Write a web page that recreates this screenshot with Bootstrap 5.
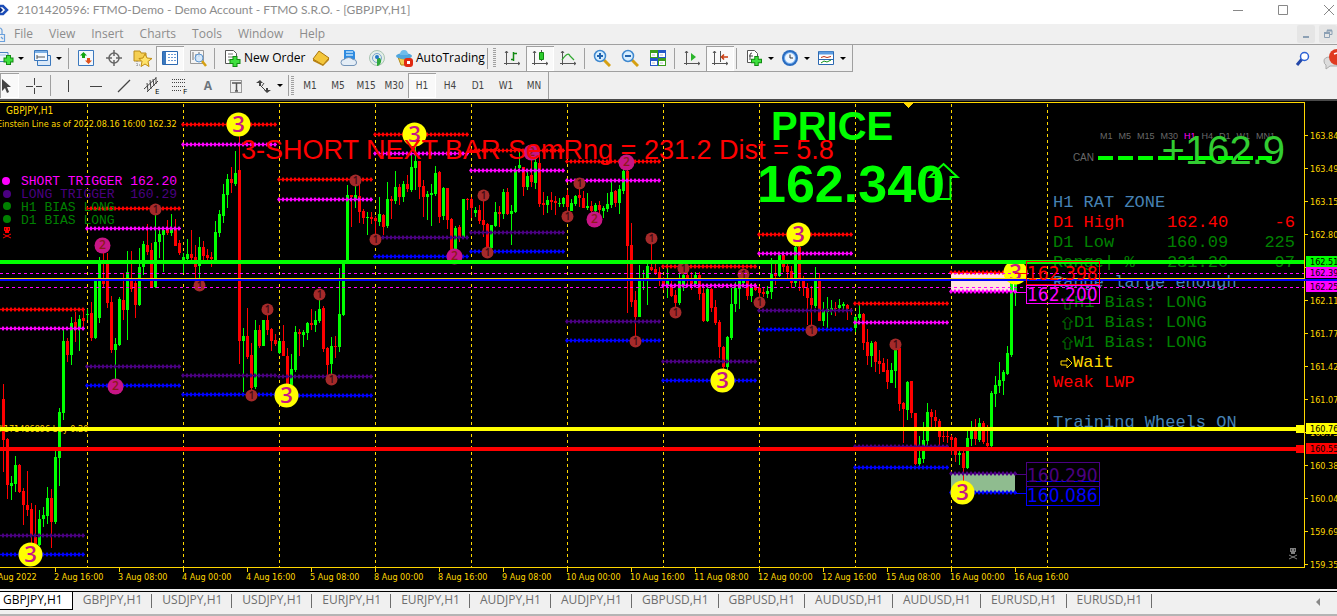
<!DOCTYPE html>
<html lang="en">
<head>
<meta charset="utf-8">
<meta name="viewport" content="width=device-width, initial-scale=1">
<title>FTMO-Demo - GBPJPY,H1</title>
<link href="https://cdn.jsdelivr.net/npm/bootstrap@5.3.0/dist/css/bootstrap.min.css" rel="stylesheet">
<style>
  body { font-family: "Open Sans", "Noto Sans", sans-serif; font-size: 12px; line-height: 16px; background: #f0f0f0; overflow: hidden; color: #000; }
  button, a { font: inherit; color: inherit; }
  button { border: 0; background: none; padding: 0; }
  svg { display: block; flex: none; }
  .titlebar { height: 20px; background: #fff; color: #8c8c8c; font-family: Lato, "Open Sans", sans-serif; box-sizing: content-box; padding-bottom: 4px; }
  .titlebar .win { width: 46px; height: 16px; }
  .menubar { height: 21px; border-bottom: 1px solid #a0a0a0; color: #8c8c8c; }
  .menubar a { text-decoration: none; }
  .mdi { width: 18px; height: 18px; background: #e5e5e5; border-radius: 2px; }
  .strip { height: 27px; }
  .strip-in { border-right: 1px solid #a0a0a0; }
  .strip-one .strip-in { border-bottom: 1px solid #a0a0a0; }
  .tool { width: 28px; height: 25px; display: flex; align-items: center; justify-content: center; }
  .drop { width: 36px; justify-content: flex-start; gap: 5px; padding-left: 5px; }
  .drop::after, .caret::after { content: ""; border: 3px solid transparent; border-top-color: #000; border-bottom: 0; }
  .first { width: 28px; justify-content: flex-start; gap: 4px; }
  .wide { width: auto; justify-content: flex-start; gap: 3px; padding-left: 5px; }
  .pressed { background: #f9f9f9; box-shadow: inset 1px 1px #a0a0a0, inset -1px -1px #fff; }
  .rule { width: 1px; height: 21px; background: #a0a0a0; margin: 0 3px 0 2px; }
  .grip { width: 3px; height: 20px; margin: 0 2px; background: repeating-linear-gradient(#a0a0a0 0 1px, #f0f0f0 1px 2px); }
  .period { font-family: "DejaVu Sans Condensed", sans-serif; font-size: 10px; color: #444; }
  .chart { min-height: 488px; background: #000; border-top: 2px solid #4a4a4a; }
  .tiny { font-family: "DejaVu Sans Condensed", "DejaVu Sans", sans-serif; font-size: 9px; }
  .hud { right: 0; top: 0; width: 274px; height: 100%; font-family: "Liberation Sans", sans-serif; color: #696969; overflow: hidden; }
  .frames { right: 29px; top: 29px; font-size: 9px; line-height: 12px; width: 175px; }
  .frames span { flex: none; }
  .quote { right: 19px; top: 26px; font-size: 40px; line-height: 46px; color: #32cd32; }
  .can { right: 32px; top: 51px; font-size: 10px; line-height: 12px; }
  .dashes { width: 174px; height: 4px; background: repeating-linear-gradient(90deg, #0f0 0 15px, transparent 15px 20px); }
  .zone { top: 92px; left: 23px; width: 242px; font-family: "Liberation Mono", monospace; font-size: 17px; line-height: 20px; }
  .zone table { width: 100%; }
  .zone td { padding: 0; line-height: 20px; }
  .blu { color: #4682b4; } .grn { color: #008000; } .rd { color: #f00; } .gld { color: #ffd700; }
  .arw { margin: 0 1px 0 9px; }
  .plot { min-width: 0; }
  .sheets { height: 20px; border-top: 1px solid #000; color: #6d6d6d; box-shadow: 0 -2px #f0f0f0; margin-top: 2px; }
  .sheet { height: 18px; padding: 0 10px 0 10px; text-decoration: none; line-height: 16px; white-space: nowrap; }
  .sheet + .sheet { border-right: 1px solid #6d6d6d; height: 14px; margin-top: 2px; line-height: 12px; padding-right: 9px; }
  .sheet.current { background: #fff; color: #000; padding: 0 9px 0 3px; border: solid #000; border-width: 0 1px 1px 0; }
  .foot { height: 5px; border-bottom: 2px solid #b4b4b4; }
</style>
<script src="https://cdn.jsdelivr.net/npm/bootstrap@5.3.0/dist/js/bootstrap.bundle.min.js"></script>
</head>
<body class="d-flex flex-column min-vh-100">

<header class="titlebar d-flex align-items-center">
  <svg width="9" height="16" viewBox="0 0 9 16"><path d="M0 4h3l4 4-4 4H0" fill="none" stroke="#1d4db8" stroke-width="2.5"/><path d="M0 5l3 3-3 3z" fill="#0a2f86"/></svg>
  <span class="ps-1 ms-1">2101420596: FTMO-Demo - Demo Account - FTMO S.R.O. - [GBPJPY,H1]</span>
  <div class="ms-auto d-flex">
    <button class="win" aria-label="Minimize"><svg width="46" height="16"><path d="M18 8.500h10" stroke="#888"/></svg></button>
    <button class="win" aria-label="Maximize"><svg width="46" height="16"><path d="M17.500 3.500h9v9h-9z" fill="none" stroke="#888"/></svg></button>
    <button aria-label="Close"><svg width="30" height="16"><path d="M17 3l10 10M27 3L17 13" stroke="#888"/></svg></button>
  </div>
</header>

<nav class="menubar d-flex align-items-center" aria-label="Menu">
  <svg width="6" height="18" viewBox="0 0 6 18"><path d="M-4 9.500h8.500v7H-4M-2 9V5q2-4 4 0v4M1 12l2 2" fill="none" stroke="#6aa0dc" stroke-width="1.200"/></svg>
  <div class="d-flex ps-2 gap-3">
    <a href="#">File</a><a href="#">View</a><a href="#">Insert</a><a href="#">Charts</a><a href="#">Tools</a><a href="#">Window</a><a href="#">Help</a>
  </div>
  <div class="ms-auto d-flex gap-1">
    <button class="mdi" aria-label="Minimize chart"><svg width="18" height="18"><path d="M6 12h6" stroke="#8ca0b4" stroke-width="2"/></svg></button>
    <button class="mdi" aria-label="Restore chart"><svg width="18" height="18"><path d="M5.500 8.500h5v4h-5zM8 8V5.500h5v4h-2" fill="none" stroke="#8ca0b4"/><path d="M5 8h6M8 5.500h5" stroke="#8ca0b4" stroke-width="2"/></svg></button>
  </div>
</nav>

<div class="strip strip-one d-flex">
  <div class="strip-in d-flex align-items-center pe-1">
    <button class="tool first" aria-label="New chart"><svg width="14" height="20"><path d="M0 4.500h8v9H0" fill="#eef5fc" stroke="#4b84c4"/><path d="M0 7h6" stroke="#9bbfe4"/><path d="M8.500 7v10M3.500 12h10" stroke="#128a12" stroke-width="5"/><path d="M8.500 8v8M4.500 12h8" stroke="#3ee03e" stroke-width="3"/></svg><span class="caret d-flex"></span></button>
    <button class="tool drop" style="width:38px" aria-label="Profiles"><svg width="18" height="18"><path d="M4.500 6.500h13v10h-13z" fill="#dbe9f8" stroke="#3b78bd"/><path d="M1.500 1.500h13v10h-13z" fill="#f4f9fe" stroke="#3b78bd"/><path d="M2 3h12" stroke="#7db0e4" stroke-width="2"/><path d="M4 6v4M4 8h8" stroke="#555"/></svg></button>
    <span class="rule"></span>
    <button class="tool" aria-label="Market watch"><svg width="18" height="18"><path d="M1.500 1.500h15v15h-15z" fill="#f3f8fd" stroke="#3b78bd"/><path d="M6.500 3l3.500 3.500H8V9H5V6.500H3z" fill="#11a511"/><path d="M11.500 15L8 11.500h2V9h3v2.500h2z" fill="#e0511a"/></svg></button>
    <button class="tool" aria-label="Data window"><svg width="18" height="18"><circle cx="9" cy="9" r="5" fill="none" stroke="#666" stroke-width="1.500"/><path d="M9 1v6M9 11v6M1 9h6M11 9h6" stroke="#666" stroke-width="1.500"/></svg></button>
    <button class="tool" aria-label="Navigator"><svg width="20" height="18"><path d="M2 2h6l1 2h5v8H2z" fill="#f5cf52" stroke="#b98a18"/><path d="M13 5l2 4 5 .500-4 3 1 5-4-2.500-4 2.500 1-5-3-3 4-.500z" fill="#ffe36a" stroke="#c08c10"/><path d="M5 12v5M5 16h3" stroke="#888" stroke-dasharray="1 1"/></svg></button>
    <button class="tool pressed" aria-label="Terminal"><svg width="18" height="18"><path d="M1.500 2.500h15v13h-15z" fill="#fff" stroke="#2b68b1"/><path d="M2 3h3v12H2z" fill="#3b78bd"/><path d="M7 5.500h9M7 8.500h9M7 11.500h9" stroke="#6b9bd6" stroke-dasharray="2 1"/></svg></button>
    <button class="tool" aria-label="Strategy tester"><svg width="18" height="18"><path d="M1.500 1.500h13v13h-13z" fill="#f4f4f4" stroke="#999"/><path d="M4 3v8M7 5v6M10 3v5" stroke="#777"/><circle cx="10" cy="9" r="4" fill="#cfe6fb" fill-opacity=".8" stroke="#5b94cf"/><path d="M13 12l4 5" stroke="#d6a012" stroke-width="2.500"/></svg></button>
    <span class="rule"></span>
    <button class="tool wide" style="width:89px"><svg width="18" height="19"><path d="M2.500 1.500h8l3 3v10h-11z" fill="#fff" stroke="#555"/><path d="M5 5h5M5 8h6M5 11h4" stroke="#777"/><path d="M12 7v11M6.500 12.500h11" stroke="#128a12" stroke-width="5"/><path d="M12 8v9M7.500 12.500h9" stroke="#3ee03e" stroke-width="3"/></svg>New Order</button>
    <button class="tool" aria-label="MetaEditor"><svg width="18" height="18"><path d="M1 10l6-8 10 7-6 7z" fill="#f3c63b" stroke="#a8760f"/><path d="M1 10l10 6 6-7v2l-6 6L1 12z" fill="#b8800f"/></svg></button>
    <button class="tool" aria-label="Virtual hosting"><svg width="18" height="18"><path d="M4 1h9l2 2v7H4z" fill="#2f8be0"/><path d="M6 3h7M6 6h7" stroke="#bfe3ff" stroke-width="1.500"/><path d="M4 16.500a3 3 0 0 1 0-6q5-4 9 0a3 3 0 0 1 1 6z" fill="#e4edf6" stroke="#7293b8"/></svg></button>
    <button class="tool" aria-label="Signals"><svg width="18" height="18"><circle cx="9" cy="9" r="7.500" fill="#e4efe8" stroke="#a9c4b2"/><circle cx="9" cy="9" r="4.500" fill="none" stroke="#7aa3cf"/><path d="M9 9h3a5 5 0 0 1-3 8z" fill="#2fa83c"/><circle cx="9" cy="8" r="2" fill="#2378c8"/></svg></button>
    <button class="tool wide" style="width:94px; padding-left:4px"><svg width="18" height="18"><path d="M3 8q5 4 12 0l-3 8H6z" fill="#f3cf54" stroke="#b18918"/><ellipse cx="9" cy="7" rx="8" ry="3" fill="#4fa6de"/><path d="M5 6q0-5 4-5t4 5z" fill="#6dbcec"/><rect x="9" y="9" width="9" height="9" rx="3" fill="#e02a12"/><path d="M12 12h3v3h-3z" fill="#fff"/></svg>AutoTrading</button>
    <span class="rule"></span><span class="grip"></span>
    <button class="tool" aria-label="Bar chart"><svg width="18" height="18"><path d="M3.500 2v14M1 14.500h16M2 4l1.500-2L5 4M15 13l2 1.500-2 1.500" fill="none" stroke="#555"/><path d="M10.500 3v9M8 10.500h2M11 4.500h3" stroke="#128a12" stroke-width="1.500"/></svg></button>
    <button class="tool pressed" aria-label="Candlesticks"><svg width="18" height="18"><path d="M3.500 2v14M1 14.500h16M2 4l1.500-2L5 4M15 13l2 1.500-2 1.500M10.500 1v11" fill="none" stroke="#555"/><path d="M8.500 3.500h4v7h-4z" fill="#2ecc2e" stroke="#128a12"/></svg></button>
    <button class="tool" aria-label="Line chart"><svg width="18" height="18"><path d="M3.500 2v14M1 14.500h16M2 4l1.500-2L5 4M15 13l2 1.500-2 1.500" fill="none" stroke="#555"/><path d="M3 11q6-9 8-4l4 4" fill="none" stroke="#30a830" stroke-width="1.300"/></svg></button>
    <span class="rule"></span>
    <button class="tool" aria-label="Zoom in"><svg width="18" height="18"><path d="M11 11l6 6" stroke="#d6a012" stroke-width="3"/><circle cx="7" cy="7" r="5.500" fill="#d8efff" stroke="#3f88cf" stroke-width="1.500"/><path d="M4 7h6M7 4v6" stroke="#2465ae" stroke-width="2"/></svg></button>
    <button class="tool" aria-label="Zoom out"><svg width="18" height="18"><path d="M11 11l6 6" stroke="#d6a012" stroke-width="3"/><circle cx="7" cy="7" r="5.500" fill="#d8efff" stroke="#3f88cf" stroke-width="1.500"/><path d="M4 7h6" stroke="#2465ae" stroke-width="2"/></svg></button>
    <button class="tool" aria-label="Tile windows"><svg width="18" height="18"><path d="M1 1h8v8H1zM9 9h8v8H9z" fill="#3a9e1c"/><path d="M9 1h8v8H9zM1 9h8v8H1z" fill="#2458c8"/><path d="M2 4h6v4H2zM10 4h6v4h-6zM2 12h6v4H2zM10 12h6v4h-6z" fill="#fff"/><path d="M3 6h3M11 6h3M3 14h3M11 14h3" stroke="#b4bcc8"/></svg></button>
    <span class="rule"></span>
    <button class="tool" aria-label="Auto scroll"><svg width="18" height="18"><path d="M3.500 2v14M1 14.500h16M2 4l1.500-2L5 4M15 13l2 1.500-2 1.500" fill="none" stroke="#555"/><path d="M8 4l5 4-5 4z" fill="#2bb52b"/></svg></button>
    <button class="tool pressed" aria-label="Chart shift"><svg width="18" height="18"><path d="M3.500 2v14M1 14.500h16M2 4l1.500-2L5 4M15 13l2 1.500-2 1.500M9.500 2v11" fill="none" stroke="#555"/><path d="M17 8h-6M13 5.500L10.500 8l2.500 2.500" fill="none" stroke="#c83c10" stroke-width="1.500"/></svg></button>
    <span class="rule"></span>
    <button class="tool drop" aria-label="Indicators"><svg width="18" height="18"><path d="M2.500 1.500h7l3 3v9h-10z" fill="#fff" stroke="#555"/><path d="M5 11V6q0-2 2-2M4 7h4" fill="none" stroke="#444"/><path d="M11.500 7v10M6 12h11" stroke="#128a12" stroke-width="4.500"/><path d="M11.500 8v8M7 12h9" stroke="#3ee03e" stroke-width="2.500"/></svg></button>
    <button class="tool drop" aria-label="Periods"><svg width="18" height="18"><circle cx="9" cy="9" r="8" fill="#2a6cc0"/><circle cx="9" cy="9" r="5.500" fill="#eef6ff" stroke="#6aaaf0"/><path d="M9 5.500V9h3" fill="none" stroke="#333"/></svg></button>
    <button class="tool drop" aria-label="Templates"><svg width="18" height="18"><path d="M1.500 2.500h15v13h-15z" fill="#fff" stroke="#2b68b1"/><path d="M2 4h14" stroke="#5b9be0" stroke-width="3"/><path d="M4 8.500l3-1 3 1 4-1" stroke="#c03010" fill="none"/><path d="M2 10.500h14" stroke="#2b68b1"/><path d="M4 14l3-2 3 1 4-2" stroke="#11931b" fill="none"/></svg></button>
  </div>
  <div class="ms-auto d-flex align-items-center gap-2">
    <button aria-label="Search"><svg width="16" height="16"><path d="M2 14l5-6" stroke="#2347a8" stroke-width="3"/><circle cx="9.500" cy="5.500" r="4" fill="#fff" stroke="#2d62d4" stroke-width="1.500"/></svg></button>
    <button class="ms-1" aria-label="Notifications"><svg width="14" height="24"><path d="M1 14q0-4 6-4h7v9H7l-4 3v-4q-2-1-2-4z" fill="#dcdcdc" stroke="#aaa"/><circle cx="14" cy="10" r="8" fill="#e03a20"/><path d="M11 7l3-1" stroke="#fff" stroke-width="1.500"/></svg></button>
  </div>
</div>

<div class="strip d-flex">
  <div class="strip-in d-flex align-items-center">
    <button class="tool pressed" style="width:19px; justify-content:start" aria-label="Cursor"><svg width="14" height="16"><path d="M2 1v12l3-3 2 5 2-1-2-5h4z" fill="#444"/></svg></button>
    <button class="tool" style="width:29px" aria-label="Crosshair"><svg width="16" height="16"><path d="M8.500 0v7M8.500 10v6M0 8.500h7M10 8.500h6" stroke="#444"/></svg></button>
    <span class="rule"></span>
    <button class="tool" aria-label="Vertical line"><svg width="16" height="16"><path d="M8.500 2v12" stroke="#444"/></svg></button>
    <button class="tool" aria-label="Horizontal line"><svg width="16" height="16"><path d="M2 8.500h12" stroke="#444"/></svg></button>
    <button class="tool" aria-label="Trendline"><svg width="16" height="16"><path d="M2 14L14 2" stroke="#444" stroke-width="1.200"/></svg></button>
    <button class="tool" aria-label="Equidistant channel"><svg width="18" height="20"><path d="M1 13L13 2M4 16L15 5M4 7l1 8M7 4l1 9M10 3l1 7M13 1v7" stroke="#444"/><text x="12" y="18" font-size="8">E</text></svg></button>
    <button class="tool" aria-label="Fibonacci"><svg width="18" height="20"><path d="M1 3.500h14M1 6.500h14M1 10.500h14M1 14.500h9" stroke="#444" stroke-dasharray="1 1"/><text x="12" y="18" font-size="8">F</text></svg></button>
    <button class="tool fw-bold text-secondary" aria-label="Text">A</button>
    <button class="tool" aria-label="Text label"><svg width="16" height="16"><path d="M2.500 2.500h11v12h-11z" fill="none" stroke="#444" stroke-dasharray="1 1"/><path d="M4 5h9M8.500 5v8M7 13h3" fill="none" stroke="#555" stroke-width="1.500"/></svg></button>
    <button class="tool drop" aria-label="Arrows"><svg width="17" height="16"><path d="M5 2l3 3h-2v1h-2v-1H1zM4 6h2v2H4zM12 15l-3-3h2v-2h2v2h3z" fill="#444"/><path d="M6 8l4 4M9 5l-2 3" stroke="#444"/></svg></button>
    <span class="rule me-0"></span><span class="grip"></span>
    <button class="tool period">M1</button><button class="tool period">M5</button><button class="tool period">M15</button><button class="tool period">M30</button><button class="tool period pressed">H1</button><button class="tool period">H4</button><button class="tool period">D1</button><button class="tool period">W1</button><button class="tool period">MN</button>
  </div>
</div>

<main class="chart d-flex flex-grow-1">
  <div class="plot flex-grow-1 position-relative overflow-hidden">
    <section class="hud position-absolute" aria-label="Signals panel">
      <div class="frames position-absolute d-flex justify-content-between">
        <span>M1</span><span>M5</span><span>M15</span><span>M30</span><span style="color:#f0f">H1</span><span>H4</span><span>D1</span><span>W1</span><span>MN1</span>
      </div>
      <div class="quote position-absolute">+162.9</div>
      <div class="can position-absolute d-flex align-items-center gap-1"><span>CAN</span><span class="dashes"></span></div>
      <div class="zone position-absolute">
        <div class="blu">H1 RAT ZONE</div>
        <table>
          <tr class="rd"><td>D1 High</td><td>162.40</td><td class="text-end">-6</td></tr>
          <tr class="grn"><td>D1 Low</td><td>160.09</td><td class="text-end">225</td></tr>
          <tr class="grn"><td>Range| %</td><td>231.20</td><td class="text-end">97</td></tr>
        </table>
        <div class="blu">Range large enough</div>
        <div class="grn d-flex align-items-center"><svg class="arw" width="11" height="14"><use href="#up"/></svg>H1 Bias: LONG</div>
        <div class="grn d-flex align-items-center"><svg class="arw" width="11" height="14"><use href="#up"/></svg>D1 Bias: LONG</div>
        <div class="grn d-flex align-items-center"><svg class="arw" width="11" height="14"><use href="#up"/></svg>W1 Bias: LONG</div>
        <div class="gld d-flex align-items-center"><svg style="margin-left:7px" width="13" height="12"><path d="M1 4h6V1l5 5-5 5V8H1z" fill="none" stroke="#ffd700"/></svg>Wait</div>
        <div class="rd">Weak LWP</div>
        <div>&nbsp;</div>
        <div class="blu">Training Wheels ON</div>
      </div>
    </section>
    <svg class="position-relative" width="100%" height="486" role="img" aria-label="GBPJPY hourly candlestick chart">
      <defs>
        <g id="up"><path d="M5.500 1l5 5H8v7H3V6H.500z" fill="none" stroke="#008000"/></g>
        <g id="skull"><path d="M2 1h6v4H7v2H3V5H2z" fill="currentColor"/><path d="M3 3h1M6 3h1" stroke="#000"/><path d="M1 8l8 4M9 8l-8 4" stroke="currentColor"/></g>
      </defs>
      <g transform="translate(0,-101)">
        <g id="grid"></g>
        <path d="M951 272h64v20h-64z" fill="#ffe4e1"/><path d="M951 473h64v20h-64z" fill="#8fbc8f"/>
        <g id="bars" shape-rendering="crispEdges"></g>
        <g id="levels"></g>
        <g id="marks" text-anchor="middle"></g>
        <g class="tiny" fill="#ffd700">
          <text x="6" y="114" style="font-size:10px">GBPJPY,H1</text><text x="-3" y="127">Einstein Line as of 2022.08.16 16:00 162.32</text>
          <text x="-3" y="432">#171486896 buy 0.20</text>
        </g>
        <g font-family="Liberation Mono, monospace" font-size="13">
          <circle cx="6" cy="181" r="4" fill="#f0f"/><text x="21" y="185" fill="#f0f">SHORT TRIGGER 162.20</text>
          <circle cx="7" cy="194" r="4" fill="#4b0082"/><text x="21" y="198" fill="#4b0082" xml:space="preserve">LONG TRIGGER  160.29</text>
          <circle cx="7" cy="206" r="4" fill="#008000"/><text x="21" y="211" fill="#008000">H1 BIAS LONG</text>
          <circle cx="7" cy="219" r="4" fill="#008000"/><text x="21" y="224" fill="#008000">D1 BIAS LONG</text>
          <use href="#skull" x="2" y="226" color="#f00"/>
        </g>
        <g font-family="Liberation Sans, sans-serif">
          <text x="241" y="159" font-size="27" fill="#f00">3-SHORT NEXT BAR SemRng = 231.2 Dist = 5.8</text>
          <g font-weight="bold" fill="#0f0"><text x="771" y="140" font-size="40">PRICE</text><text x="757" y="202" font-size="52">162.340</text></g>
        </g>
        <path d="M943.500 164l14 13h-7v22h-15v-22h-6z" fill="none" stroke="#0f0" stroke-width="2"/>
        <g shape-rendering="crispEdges">
          <rect y="260" width="100%" height="4" fill="#0f0"/>
          <line x2="100%" y1="273.500" y2="273.500" stroke="#f0f" stroke-dasharray="3 3"/>
          <line x2="100%" y1="287.500" y2="287.500" stroke="#f0f" stroke-dasharray="3 3"/>
          <rect y="278" width="100%" height="1" fill="#ffd700"/>
          <rect y="279" width="100%" height="2" fill="#00f"/>
          <rect y="427" width="100%" height="4" fill="#ff0"/>
          <rect y="447" width="100%" height="4" fill="#f00"/>
          <rect y="102" width="100%" height="1" fill="#ffd700"/>
          <rect y="567" width="100%" height="1" fill="#ffd700"/>
          <path d="M904 103h9l-4.500 5z" fill="#ffd700"/>
        </g>
        <g fill="none" shape-rendering="crispEdges">
          <path d="M1015 273.500h11.500M1026.500 261.500h73v23h-73z" stroke="#f00"/>
          <path d="M1015 292.500h11.500M1026.500 285.500h73v18h-73z" stroke="#f0f"/>
          <path d="M1015 493.500h11.500M1026.500 481.500h73v24h-73z" stroke="#00f"/>
          <path d="M1015 474.500h11.500M1026.500 462.500h73v24h-73z" stroke="#4b0082"/>
        </g>
        <g font-family="DejaVu Sans Condensed, DejaVu Sans, sans-serif" font-size="19">
          <text x="1027" y="280" fill="#f00">162.398</text><text x="1027" y="301" fill="#f0f">162.200</text>
          <text x="1027" y="482" fill="#4b0082">160.290</text><text x="1027" y="502" fill="#00f">160.086</text>
        </g>
        <g id="dates" class="tiny" fill="#ffd700"></g>
      </g>
      <svg x="100%" overflow="visible"><g transform="translate(-16,446)" color="#808080"><use href="#skull"/></g>
        <path d="M-8 324h8v8h-8z" fill="#ff0"/><path d="M-8 344h8v8h-8z" fill="#f00"/></svg>
    </svg>
  </div>
  <svg width="33" height="486" role="img" aria-label="Price scale"><g transform="translate(-1304,-101)">
    <path d="M1304.500 102v466" stroke="#ffd700"/><path d="M1304 279h33v2h-33z" fill="#00f"/>
    <g id="axis" class="tiny"></g></g>
  </svg>
</main>

<footer>
  <nav class="sheets d-flex" id="sheets" aria-label="Charts"></nav>
  <div class="foot"></div>
</footer>

<script>
const byId = id => document.getElementById(id);

// One entry per hour: direction, body top, body bottom, high, low.
const bars = `R399 440 384 472,R439 485 438 499,G483 486 476 500,G465 484 456 492,R465 492 464 493,R491 505 488 525,R505 510 471 516,R509 536 503 543,R537 544 505 545,G519 545 510 546,G515 519 507 527,G498 516 487 524,R498 522 489 548,G457 522 451 524,G412 458 408 486,G341 413 330 420,R341 355 338 362,G323 355 317 365,R322 330 312 342,G319 328 315 351,R318 321 311 330,G314 315 309 320,R313 338 302 341,G281 338 278 339,G262 318 257 323,R281 284 252 287,R262 303 253 308,R302 350 296 353,G344 350 338 382,G299 345 297 346,R300 310 273 320,G272 310 251 340,R280 289 251 292,R283 305 278 318,G267 305 248 306,G244 267 241 275,R245 252 224 255,R250 287 243 288,G242 287 205 288,G234 242 230 258,G230 235 227 272,R228 233 220 235,G228 233 214 236,R228 246 219 246,R243 253 240 255,G257 262 253 273,G254 259 239 260,R254 258 230 260,R257 267 245 280,G247 266 237 281,R247 256 241 261,R255 258 249 261,R257 259 252 267,G232 261 221 262,G214 233 210 237,G194 216 184 223,G179 195 174 208,R179 183 167 193,G173 184 151 186,R170 341 135 364,G336 341 328 392,R336 357 308 359,R355 388 343 390,G330 387 320 389,R330 346 325 348,G320 346 320 346,R320 330 313 335,R329 341 328 351,R340 344 334 346,G341 353 340 354,R341 356 325 356,R356 385 348 390,G369 385 354 390,G332 370 326 372,R332 334 329 356,G332 335 330 347,G323 333 322 340,R323 325 309 330,G320 325 311 332,G309 321 294 323,R308 349 306 352,R348 365 347 375,G346 364 337 375,R346 347 336 358,G314 347 268 352,G263 315 262 316,G195 263 185 264,R195 197 195 227,G195 199 180 208,R196 212 183 223,R211 218 209 224,G217 218 212 235,R217 219 212 224,R218 221 216 234,G214 222 197 226,R215 227 214 235,G199 226 182 228,R199 201 196 219,G187 201 171 204,R187 197 184 205,G184 197 181 202,R184 189 175 192,G167 190 153 192,G161 168 145 190,R161 187 161 199,R186 197 180 217,G194 197 191 220,G193 195 184 226,G173 194 166 196,R172 217 171 223,G188 216 187 220,R188 220 188 229,R219 252 218 253,G228 255 226 255,R227 237 225 242,G199 237 199 237,R199 200 198 210,R199 208 197 218,G210 213 207 217,R210 221 205 224,R220 225 195 237,R224 250 223 252,G225 248 225 250,G212 226 202 227,R212 214 206 227,G192 214 189 219,R192 214 188 215,G211 214 205 245,G171 212 166 213,G165 168 152 172,R167 187 167 196,G176 187 172 190,R175 182 150 187,G162 183 158 189,R163 204 153 207,R203 205 192 215,G200 205 196 213,R200 202 192 210,R201 203 196 215,G203 204 198 207,G198 204 197 207,R195 207 190 216,G203 211 199 211,G196 204 195 206,R195 198 185 207,R198 208 191 208,G206 208 193 210,R206 211 201 212,G205 211 203 218,R205 210 201 215,G208 211 206 218,G204 209 193 212,G192 205 182 208,R191 203 190 207,G189 203 185 214,G171 191 167 194,R171 246 165 313,R245 302 223 307,R300 317 291 336,G280 317 265 317,G278 281 270 290,G266 281 263 305,R267 270 243 271,R269 273 263 275,R272 281 267 286,R281 285 277 290,G281 285 262 298,R285 296 280 297,R295 303 290 307,G281 303 272 305,G275 285 272 291,R275 281 268 285,R278 284 272 290,G275 284 272 286,R275 294 272 300,R293 321 287 322,G289 321 287 322,R289 308 288 312,R307 323 300 325,R322 347 320 358,R347 367 346 369,G337 367 336 370,G304 338 288 340,G288 304 282 312,G281 289 275 309,G277 283 270 285,R281 296 276 300,G287 296 283 302,R286 290 283 291,R288 293 286 298,R292 294 288 297,G291 294 286 298,G274 292 258 299,R273 276 260 285,G255 276 252 277,R255 267 254 272,R266 272 262 280,R271 283 266 288,G247 283 246 287,R247 281 246 291,R280 288 276 296,R288 298 283 325,R298 305 286 325,G279 306 267 308,R279 321 273 321,G311 321 302 326,G309 312 297 328,G308 310 300 315,R308 309 302 316,G305 308 299 311,G304 306 302 309,R305 309 304 320,R310 311 308 315,G317 328 316 332,G314 318 305 320,R314 343 313 350,R342 356 329 365,G343 356 341 367,R342 362 341 372,R361 364 350 374,R363 372 358 372,R370 382 359 389,G370 383 363 383,G349 371 343 388,R348 404 347 411,R403 409 402 443,G382 410 381 420,R381 413 381 418,R413 464 413 465,G458 464 436 466,G440 459 422 463,G412 441 403 447,R412 417 409 427,R417 421 410 428,R421 437 419 447,R436 437 430 442,R436 437 431 443,R437 440 435 455,R438 455 437 462,G453 455 450 465,R453 468 450 481,G438 468 428 469,G430 439 421 446,R430 439 419 445,G423 440 418 442,R423 442 421 444,R443 446 425 447,G393 446 391 447,G385 394 376 407,G380 386 362 393,G372 381 370 395,G353 374 346 375,G280 355 278 357,G281 292 275 306`.split(',');
byId('bars').innerHTML = bars.map((b, i) => {
  const [t, e, h, l] = b.slice(1).split(' ').map(Number), x = 2 + 4 * i;
  return `<path fill="${b[0] === 'R' ? '#f00' : '#0f0'}" d="M${x} ${t}h3v${Math.max(1, e - t)}h-3zM${x + 1} ${h}h1v${l - h}h-1z"/>`;
}).join('');

// Session levels: x of the first bar, bar count, then red / magenta / indigo / blue heights.
const sessions = [[-1,22,309,328,535,554],[87,24,208,228,366,385],[183,24,124,144,375,394],[279,24,179,199,376,395],[375,24,134,153,237,256],[471,24,150,170,232,251],[567,24,161,180,321,340],[663,24,266,285,361,380],[759,24,234,253,310,329],[855,24,303,322,446,467],[951,17,272,291,473,492]];
const tones = ['#f00', '#f0f', '#4b0082', '#00f'];
byId('levels').innerHTML = sessions.map(([x, n, ...ys]) => ys.map((y, k) => {
  let d = `M${x - 1} ${y}h${n * 4 - 1}v1h${1 - n * 4}z`;
  for (let i = 0; i < n; i++) d += `M${x - 2 + 4 * i} ${y + .5}l2 -2.500 2 2.500 -2 2.500z`;
  return `<path d="${d}" fill="${tones[k]}"/>`;
}).join('')).join('');

let grid = '';
for (let x = 87; x <= 1047; x += 96) grid += `<path d="M${x}.5 104V567" stroke="#ffd700" stroke-dasharray="3 3"/>`;
byId('grid').innerHTML = grid;

const marks = {
  3: [[30,554],[238,124],[414,134],[286,395],[722,380],[798,234],[1015,272],[962,492]],
  2: [[102,245],[115,386],[454,256],[531,152],[626,162],[594,219]],
  1: [[155,209],[199,285],[267,309],[319,294],[251,395],[331,379],[355,180],[375,239],[483,195],[487,252],[567,216],[579,183],[651,238],[635,341],[683,268],[743,274],[675,312],[759,302],[811,330],[895,344]]
};
const look = { 1: ['#a52a2a', 6, 10, '#3c0a14'], 2: ['#c71585', 8, 12, '#8b1a1a'], 3: ['#ff0', 12, 22, '#c71585'] };
byId('marks').innerHTML = [1, 2, 3].map(k => marks[k].map(([x, y]) => {
  const [bg, r, fs, ink] = look[k];
  return `<circle cx="${x + .5}" cy="${y + .5}" r="${r}" fill="${bg}"/><text x="${x + .5}" y="${y + Math.round(fs * .36)}" font-size="${fs}" font-weight="600" fill="${ink}">${k}</text>`;
}).join('')).join('');

const days = ['1 Aug 2022','2 Aug 16:00','3 Aug 08:00','4 Aug 00:00','4 Aug 16:00','5 Aug 08:00','8 Aug 00:00','8 Aug 16:00','9 Aug 08:00','10 Aug 00:00','10 Aug 16:00','11 Aug 08:00','12 Aug 00:00','12 Aug 16:00','15 Aug 08:00','16 Aug 00:00','16 Aug 16:00'];
byId('dates').innerHTML = days.map((d, i) => `<text x="${64 * i - 10}" y="580">${d}</text><path d="M${64 * i - 9} 568h1v4h-1z"/>`).join('');

const prices = ['163.84','163.49','163.15','162.80','162.46','162.11','161.77','161.42','161.07','160.73','160.38','160.04','159.69','159.35'];
const tags = [[256,'162.51','#0f0'],[267,'162.39','#f0f'],[281,'162.25','#f0f'],[423,'160.76','#ff0'],[443,'160.55','#f00']];
byId('axis').innerHTML = prices.map((p, i) => `<path d="M1305 ${135 + 33 * i}h3v1h-3z" fill="#ffd700"/><text x="1310" y="${139 + 33 * i}" fill="#ffd700">${p}</text>`).join('')
  + tags.map(([y, p, c]) => `<path d="M1306 ${y}h31v11h-31z" fill="${c}"/><text x="1310" y="${y + 9}" fill="#000">${p}</text>`).join('');

const sheets = ['GBPJPY','GBPJPY','USDJPY','USDJPY','EURJPY','EURJPY','AUDJPY','AUDJPY','GBPUSD','GBPUSD','AUDUSD','AUDUSD','EURUSD','EURUSD'];
byId('sheets').innerHTML = sheets.map((s, i) => `<a href="#" class="sheet${i ? '' : ' current'}">${s},H1</a>`).join('')
  + '<button class="ms-auto me-3" aria-label="Scroll tabs"><svg width="6" height="10"><path d="M5 1v8L1 5z" fill="#888"/></svg></button>';
</script>
</body>
</html>
